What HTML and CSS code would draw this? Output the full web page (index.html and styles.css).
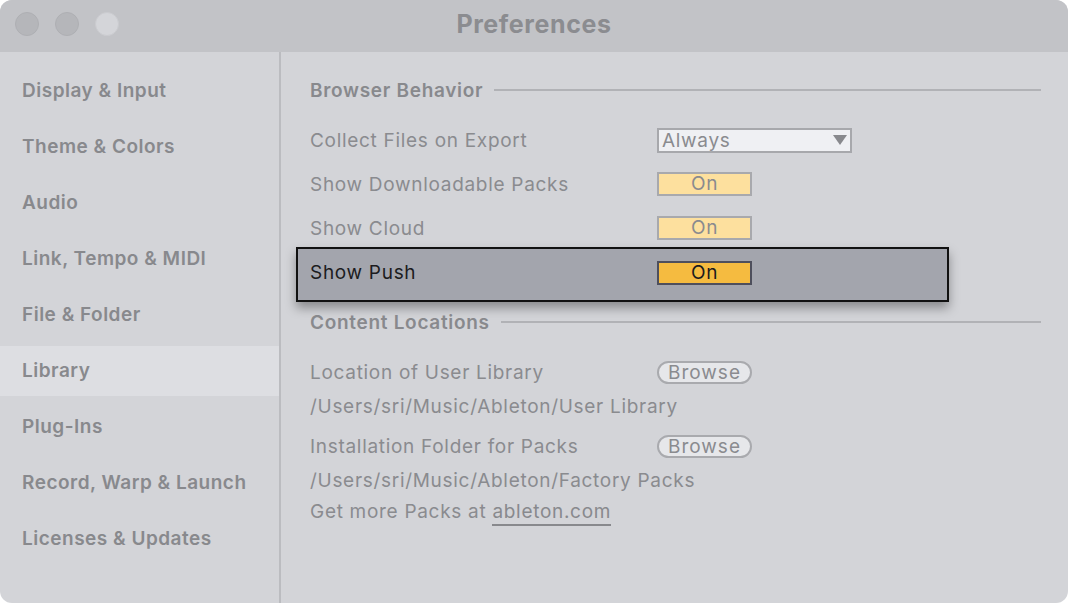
FILE: index.html
```html
<!DOCTYPE html>
<html>
<head>
    <title>Preferences</title>
    <link rel="stylesheet" href="styles.css">
</head>
<body>
<div class="window">
    <div class="titlebar">
        <div class="lights">
            <span class="light"></span>
            <span class="light"></span>
            <span class="light light-off"></span>
        </div>
        <div class="title">Preferences</div>
    </div>
    <div class="body">
        <ul class="sidebar">
            <li>Display &amp; Input</li>
            <li>Theme &amp; Colors</li>
            <li>Audio</li>
            <li>Link, Tempo &amp; MIDI</li>
            <li>File &amp; Folder</li>
            <li class="active">Library</li>
            <li>Plug-Ins</li>
            <li>Record, Warp &amp; Launch</li>
            <li>Licenses &amp; Updates</li>
        </ul>
        <div class="main">
            <div class="section-head"><span>Browser Behavior</span><i></i></div>

            <div class="row">
                <span class="label">Collect Files on Export</span>
                <div class="select">
                    <span>Always</span>
                    <svg width="14" height="10" viewBox="0 0 14 10"><path d="M0 0 H14 L7 10 Z" fill="#88898d"/></svg>
                </div>
            </div>
            <div class="row">
                <span class="label">Show Downloadable Packs</span>
                <span class="toggle">On</span>
            </div>
            <div class="row">
                <span class="label">Show Cloud</span>
                <span class="toggle">On</span>
            </div>
            <div class="row row-focus">
                <span class="label">Show Push</span>
                <span class="toggle toggle-on">On</span>
            </div>

            <div class="section-head section-second"><span>Content Locations</span><i></i></div>

            <div class="row">
                <span class="label">Location of User Library</span>
                <span class="browse">Browse</span>
            </div>
            <div class="path">/Users/sri/Music/Ableton/User Library</div>
            <div class="row">
                <span class="label">Installation Folder for Packs</span>
                <span class="browse">Browse</span>
            </div>
            <div class="path path-last">/Users/sri/Music/Ableton/Factory Packs</div>
            <div class="path">Get more Packs at <a href="#">ableton.com</a></div>
        </div>
    </div>
</div>
</body>
</html>
```

FILE: styles.css
```css
html, body
{
    margin: 0;
    padding: 0;
    background: #fff;
    overflow: hidden;
}
body
{
    font-family: Inter, "Noto Sans", sans-serif;
    font-size: 19px;
    letter-spacing: 0.7px;
    color: #8a8b8f;
}
.window
{
    width: 1068px;
    height: 603px;
    border-radius: 12px;
    overflow: hidden;
    background: #d3d4d8;
    display: flex;
    flex-direction: column;
}
.titlebar
{
    height: 52px;
    flex: none;
    background: #c2c3c7;
    display: flex;
    align-items: center;
    position: relative;
}
.lights
{
    display: flex;
    gap: 16px;
    padding-left: 15px;
    margin-top: -4px;
}
.light
{
    width: 22px;
    height: 22px;
    border-radius: 50%;
    background: #b5b6ba;
    border: 1px solid #aeafb3;
}
.light-off
{
    background: #d4d5d9;
    border-color: #cacbcf;
}
.title
{
    position: absolute;
    left: 0;
    right: 0;
    top: 9px;
    text-align: center;
    font-size: 25px;
    letter-spacing: 0.6px;
    font-weight: 700;
    color: #8b8c90;
}
.body
{
    flex: 1;
    display: flex;
}
.sidebar
{
    list-style: none;
    margin: 0;
    padding: 14px 0 0 0;
    width: 279px;
    border-right: 2px solid #bbbcc0;
}
.sidebar li
{
    height: 50px;
    margin-bottom: 6px;
    line-height: 50px;
    padding-left: 22px;
    font-weight: 600;
    font-size: 19px;
    letter-spacing: 0.5px;
    color: #88898d;
}
.sidebar li.active
{
    background: #dddee2;
}
.main
{
    flex: 1;
    padding: 24px 27px 0 29px;
}
.section-head
{
    display: flex;
    align-items: center;
    height: 28px;
    margin-bottom: 14px;
    font-weight: 600;
    color: #88898d;
}
.section-head i
{
    flex: 1;
    height: 2px;
    margin-left: 11px;
    background: #b1b2b6;
}
.section-second
{
    margin-top: 6px;
}
.row
{
    display: flex;
    align-items: center;
    height: 44px;
}
.label
{
    width: 347px;
    flex: none;
}
.select
{
    width: 185px;
    height: 21px;
    border: 2px solid #a7a8ac;
    background: #eff0f3;
    display: flex;
    align-items: center;
    justify-content: space-between;
    padding: 0 3px 0 3px;
    line-height: 21px;
}
.toggle
{
    width: 91px;
    height: 20px;
    line-height: 20px;
    text-align: center;
    border: 2px solid #a8a9ad;
    background: #fde09e;
}
.row-focus
{
    margin: -3px 92px 0 -14px;
    padding: 0 0 4px 12px;
    height: 47px;
    background: #a3a5ad;
    border: 2px solid #111;
    box-shadow: 0 6px 10px rgba(0, 0, 0, 0.35);
    color: #1c1c1e;
}
.toggle-on
{
    background: #f5bb40;
    border-color: #4e4f5c;
    color: #1c1c1e;
}
.browse
{
    width: 91px;
    height: 19px;
    line-height: 19px;
    text-align: center;
    border: 2px solid #a9aaae;
    border-radius: 12px;
    background: #e6e7ea;
    letter-spacing: 1px;
}
.path
{
    height: 30px;
    line-height: 30px;
    margin-top: -2px;
    margin-bottom: 2px;
}
.path-last
{
    margin-bottom: 3px;
}
.path a
{
    color: #88898d;
    text-decoration: none;
    border-bottom: 2px solid #88898d;
    padding-bottom: 1px;
}
```
